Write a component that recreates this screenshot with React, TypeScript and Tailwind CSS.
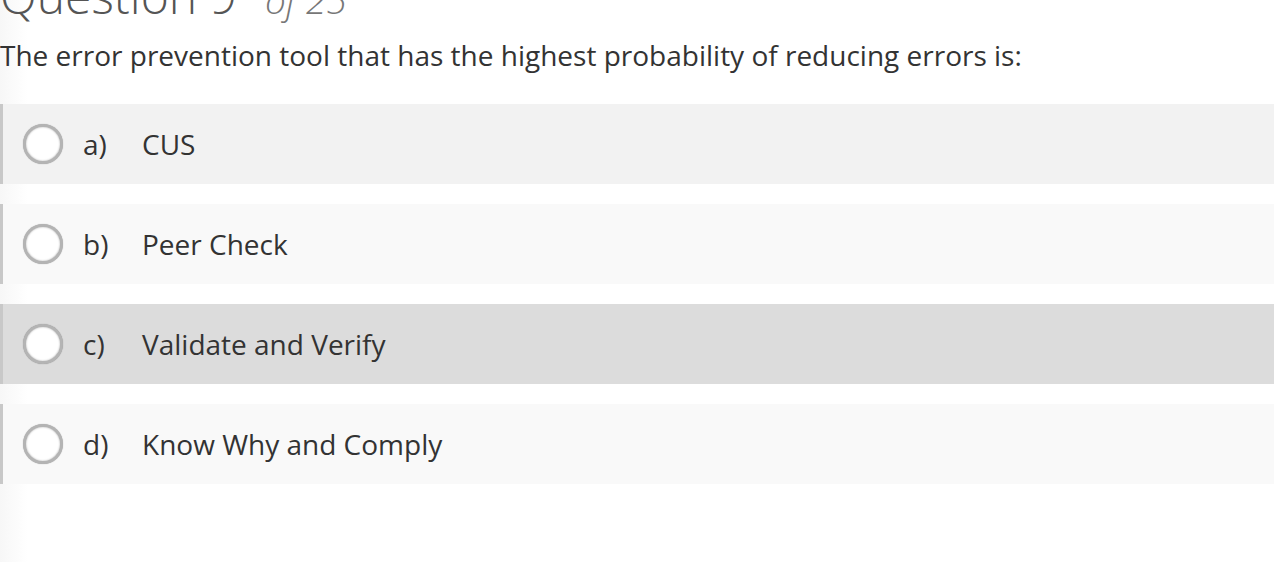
import React from "react";

const options = [
  { l: "a)", t: "CUS", bg: "bg-[#f2f2f2]" },
  { l: "b)", t: "Peer Check", bg: "bg-[#f9f9f9]" },
  { l: "c)", t: "Validate and Verify", bg: "bg-[#dcdcdc]" },
  { l: "d)", t: "Know Why and Comply", bg: "bg-[#f9f9f9]" },
];

export default function App() {
  return (
    <div
      className="w-[1274px] h-[562px] overflow-hidden bg-[linear-gradient(to_right,#f7f7f7,#ffffff_28px)] text-[#333]"
      style={{ fontFamily: '"Open Sans", sans-serif' }}
    >
      <div className="-mt-[37px] h-[65px] flex items-baseline whitespace-nowrap text-[#555]">
        <span className="text-[48px] leading-[65px] font-light">Question 9</span>
        <span className="ml-[28px] text-[37px] italic font-light text-[#777]">of 25</span>
      </div>
      <div className="mt-[8px] text-[28px] leading-[38px] whitespace-nowrap">
        The error prevention tool that has the highest probability of reducing errors is:
      </div>
      <div className="mt-[30px] flex flex-col gap-[20px]">
        {options.map((o) => (
          <div
            key={o.l}
            className={`h-[80px] flex items-center border-l-[3px] border-[#c8c8c8] pl-[20px] ${o.bg}`}
          >
            <div className="w-[40px] h-[40px] shrink-0 rounded-full bg-white border-[3px] border-[#b4b4b4] shadow-[inset_0_0_2px_rgba(0,0,0,0.3),0_0_1px_rgba(0,0,0,0.35)]" />
            <span className="ml-[20px] w-[59px] text-[28px]">{o.l}</span>
            <span className="text-[28px]">{o.t}</span>
          </div>
        ))}
      </div>
    </div>
  );
}
